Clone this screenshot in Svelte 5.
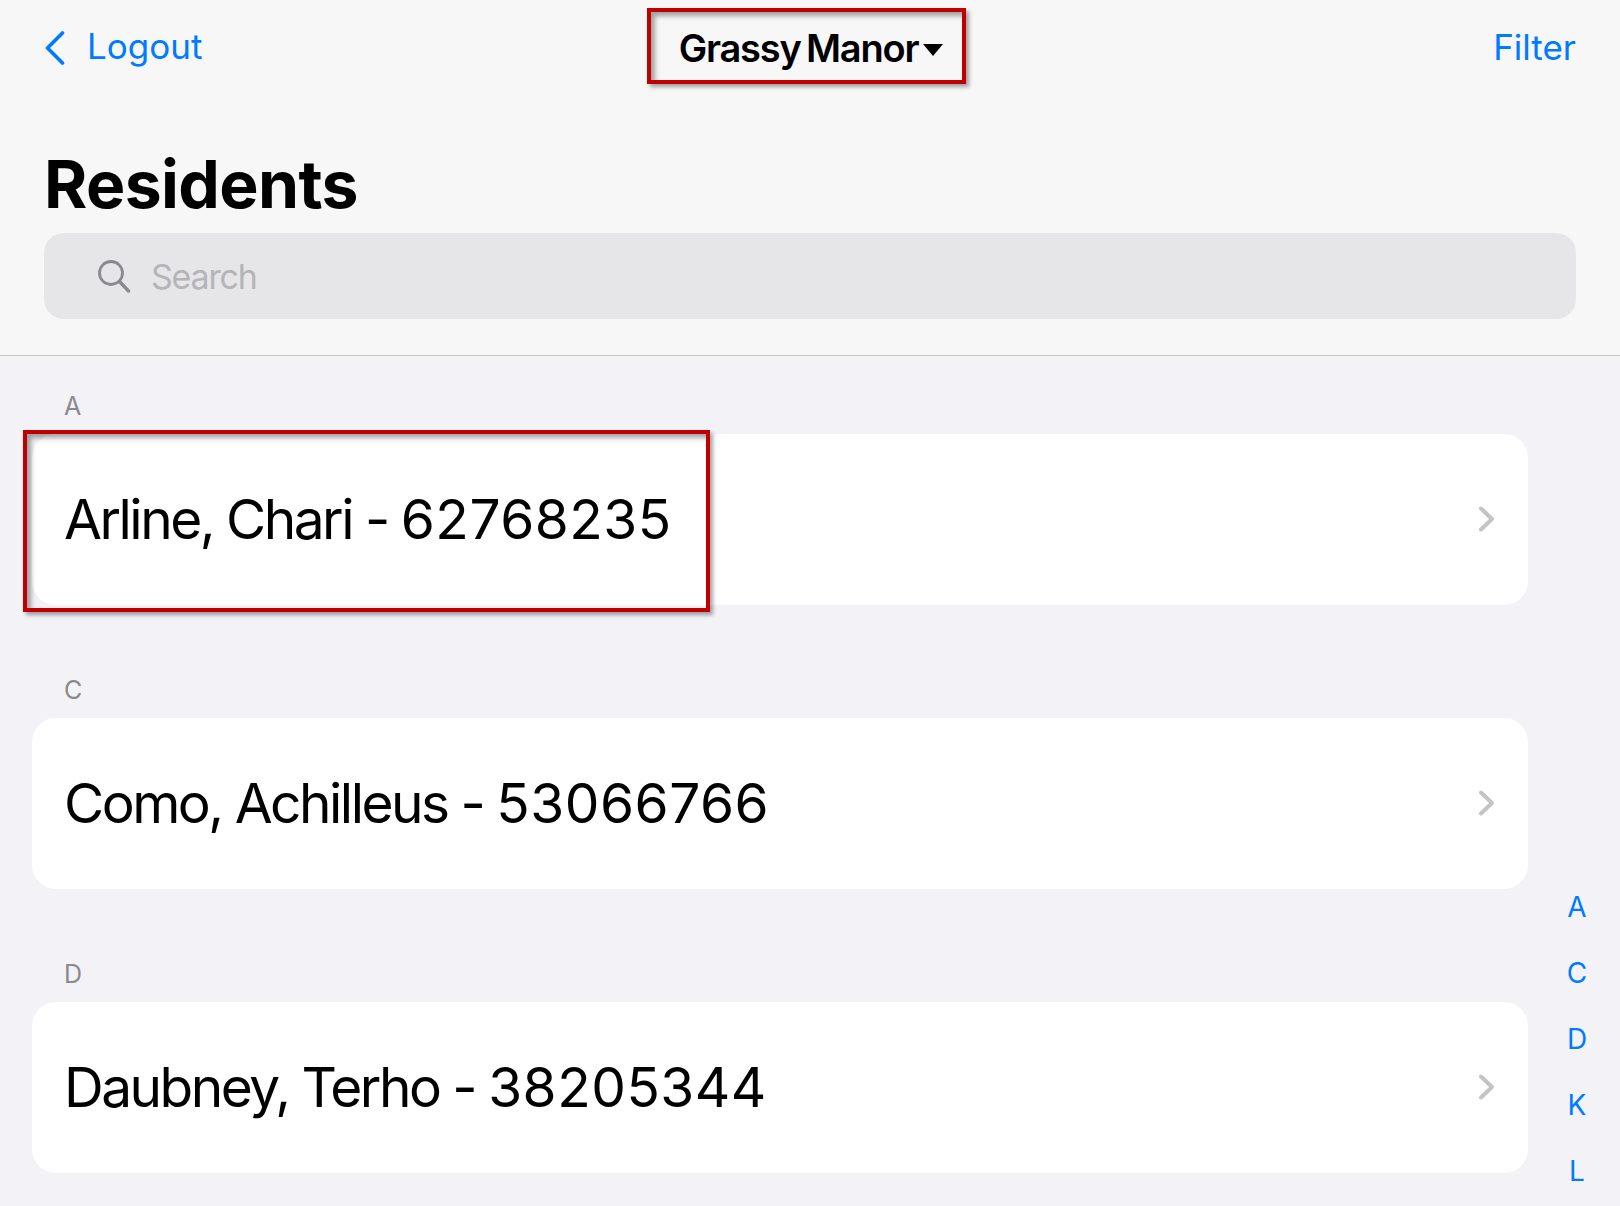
<script>
  const sections = [
    { letter: 'A', name: 'Arline, Chari - ', id: '62768235' },
    { letter: 'C', name: 'Como, Achilleus - ', id: '53066766' },
    { letter: 'D', name: 'Daubney, Terho - ', id: '38205344' }
  ];
  const index = ['A', 'C', 'D', 'K', 'L'];
</script>

<div class="screen">
  <header class="top">
    <div class="nav">
      <a class="back" href="#top">
        <svg width="22" height="34" viewBox="0 0 22 34" fill="none"><path d="M18.5 2 3.5 17l15 15" stroke="#007aff" stroke-width="3.6" stroke-linecap="round" stroke-linejoin="round"/></svg>
        <span class="back-label">Logout</span>
      </a>
      <div class="title"><span>Grassy Manor</span><i class="caret"></i></div>
      <a class="filter" href="#top">Filter</a>
    </div>
    <h1>Residents</h1>
    <div class="search">
      <svg width="34" height="34" viewBox="0 0 34 34" fill="none"><circle cx="14" cy="14" r="11.5" stroke="#8a8a8e" stroke-width="2.8"/><path d="m22.5 22.5 9 9.500" stroke="#8a8a8e" stroke-width="3.4" stroke-linecap="round"/></svg>
      <span>Search</span>
    </div>
  </header>

  <main class="list">
    {#each sections as s}
      <section>
        <div class="letter">{s.letter}</div>
        <div class="row">
          <span class="label">{s.name}<span class="num">{s.id}</span></span>
          <svg width="18" height="28" viewBox="0 0 18 28" fill="none"><path d="M3 3.500l11 10.500L3 24.500" stroke="#c4c4c6" stroke-width="4" stroke-linecap="round" stroke-linejoin="round"/></svg>
        </div>
      </section>
    {/each}
  </main>

  <nav class="rail">
    {#each index as l}<span>{l}</span>{/each}
  </nav>

  <div class="mark mark-title"></div>
  <div class="mark mark-row"></div>
</div>

<style>
  :global(body) { margin: 0; background: #f2f2f7; }
  .screen {
    position: relative;
    width: 1620px;
    height: 1206px;
    overflow: hidden;
    background: #f2f2f7;
    font-family: Inter, "Liberation Sans", sans-serif;
    color: #000;
  }
  .top {
    height: 356px;
    box-sizing: border-box;
    background: #f7f7f8;
    border-bottom: 1px solid #c6c6c8;
    padding: 0 44px;
    display: flex;
    flex-direction: column;
  }
  .nav {
    height: 96px;
    display: grid;
    grid-template-columns: 1fr auto 1fr;
    align-items: center;
    font-size: 35px;
  }
  .back {
    display: flex;
    align-items: center;
    gap: 21px;
    color: #007aff;
    text-decoration: none;
    margin-top: -1px;
  }
  .back-label {
    margin-top: -4px;
  }
  .title {
    display: flex;
    align-items: center;
    gap: 5px;
    font-size: 38px;
    font-weight: 600;
    letter-spacing: -1.2px;
    word-spacing: -3px;
    padding-left: 2px;
  }
  .caret {
    width: 0;
    height: 0;
    margin-top: 4px;
    border-left: 10px solid transparent;
    border-right: 10px solid transparent;
    border-top: 12px solid #000;
  }
  .filter {
    justify-self: end;
    color: #007aff;
    text-decoration: none;
    margin-top: -3px;
  }
  h1 {
    margin: 44px 0 -40px;
    font-size: 66px;
    line-height: 88px;
    height: 88px;
    font-weight: 700;
    letter-spacing: -0.6px;
  }
  .search {
    margin-top: 45px;
    height: 86px;
    border-radius: 20px;
    background: #e6e6e8;
    display: flex;
    align-items: center;
    gap: 20px;
    padding-left: 53px;
    font-size: 34px;
    letter-spacing: -1.2px;
    color: #b5b5b8;
  }
  .list {
    padding: 0 92px 0 32px;
    display: flex;
    flex-direction: column;
    gap: 61px;
    margin-top: 26px;
  }
  .letter {
    height: 52px;
    box-sizing: border-box;
    padding-left: 32px;
    font-size: 25px;
    line-height: 48px;
    color: #8a8a8e;
  }
  .row {
    height: 171px;
    box-sizing: border-box;
    border-radius: 24px;
    background: #fff;
    display: flex;
    align-items: center;
    justify-content: space-between;
    padding: 0 32px 2px;
    font-size: 55px;
  }
  .label {
    letter-spacing: -2.5px;
    white-space: pre;
  }
  .num {
    letter-spacing: 0.5px;
  }
  .rail {
    position: absolute;
    right: 30px;
    top: 874px;
    width: 26px;
    display: flex;
    flex-direction: column;
    align-items: center;
    font-size: 28px;
    line-height: 66px;
    color: #007aff;
  }
  .mark {
    position: absolute;
    box-sizing: border-box;
    border: 4px solid #c00000;
    box-shadow: 3px 3px 4px rgba(0, 0, 0, 0.35), inset 4px 4px 5px rgba(0, 0, 0, 0.35);
  }
  .mark-title { left: 647px; top: 8px; width: 319px; height: 76px; }
  .mark-row { left: 23px; top: 430px; width: 687px; height: 182px; }
</style>
